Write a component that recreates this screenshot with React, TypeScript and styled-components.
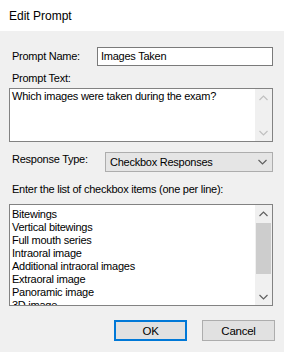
import styled, { createGlobalStyle } from 'styled-components';

const GlobalStyle = createGlobalStyle`
  html, body {
    margin: 0;
    padding: 0;
    background: #f0f0f0;
  }
  body {
    font-family: "Liberation Sans", Arial, sans-serif;
    font-size: 11px;
    letter-spacing: -0.25px;
    color: #000;
  }
`;

const Window = styled.div`
  width: 284px;
  height: 352px;
  display: flex;
  flex-direction: column;
  overflow: hidden;
`;

const TitleBar = styled.div`
  height: 31px;
  background: #fff;
  display: flex;
  align-items: center;
  padding-left: 9px;
  font-size: 12px;
  letter-spacing: 0;
`;

const Body = styled.div`
  flex: 1;
  background: #f0f0f0;
  display: flex;
  flex-direction: column;
  padding: 16px 11px 0 9px;
`;

const FieldRow = styled.div<{ $top?: number }>`
  display: flex;
  align-items: flex-start;
  margin-top: ${(p) => p.$top ?? 0}px;
`;

const Label = styled.div<{ $width?: number; $offset?: number }>`
  padding-left: 3px;
  width: ${(p) => (p.$width ? `${p.$width}px` : 'auto')};
  margin-top: ${(p) => p.$offset ?? 0}px;
  line-height: 14px;
  white-space: nowrap;
`;

const TextInput = styled.div`
  flex: 1;
  height: 19px;
  box-sizing: border-box;
  border: 1px solid #7a7a7a;
  background: #fff;
  padding: 0 3px;
  line-height: 17px;
`;

const BlockLabel = styled.div<{ $top: number }>`
  padding-left: 3px;
  margin-top: ${(p) => p.$top}px;
  line-height: 14px;
`;

const Box = styled.div<{ $height: number; $top: number }>`
  margin-top: ${(p) => p.$top}px;
  height: ${(p) => p.$height}px;
  box-sizing: border-box;
  border: 1px solid #828282;
  background: #fff;
  display: flex;
  overflow: hidden;
`;

const BoxText = styled.div<{ $padTop: number }>`
  flex: 1;
  padding: ${(p) => p.$padTop}px 2px 0 2px;
  line-height: 13px;
  white-space: pre;
  overflow: hidden;
`;

const ScrollBar = styled.div`
  width: 17px;
  background: #f0f0f0;
  display: flex;
  flex-direction: column;
`;

const ArrowCell = styled.div`
  height: 17px;
  display: flex;
  align-items: center;
  justify-content: center;
`;

const Track = styled.div`
  flex: 1;
  display: flex;
  flex-direction: column;
`;

const Thumb = styled.div`
  margin: 1px 1px 0 1px;
  height: 51px;
  background: #cdcdcd;
`;

const Select = styled.div`
  flex: 1;
  height: 20px;
  box-sizing: border-box;
  border: 1px solid #adadad;
  background: #e5e5e5;
  display: flex;
  align-items: center;
  justify-content: space-between;
  padding: 0 5px 0 4px;
`;

const ButtonRow = styled.div`
  display: flex;
  justify-content: flex-end;
  gap: 15px;
  margin-top: 14px;
  margin-right: -2px;
`;

const Button = styled.div<{ $default?: boolean }>`
  width: 73px;
  height: 21px;
  box-sizing: border-box;
  border: ${(p) => (p.$default ? '2px solid #0078d7' : '1px solid #adadad')};
  background: #e1e1e1;
  display: flex;
  align-items: center;
  justify-content: center;
  font-size: 11.5px;
`;

const Chevron = ({ up, color }: { up?: boolean; color: string }) => (
  <svg width="9" height="6" viewBox="0 0 9 6">
    <path
      d={up ? 'M0.5 5 L4.5 1 L8.5 5' : 'M0.5 1 L4.5 5 L8.5 1'}
      fill="none"
      stroke={color}
      strokeWidth="1.2"
    />
  </svg>
);

const items = [
  'Bitewings',
  'Vertical bitewings',
  'Full mouth series',
  'Intraoral image',
  'Additional intraoral images',
  'Extraoral image',
  'Panoramic image',
  '3D image',
];

export default function App() {
  return (
    <Window>
      <GlobalStyle />
      <TitleBar>Edit Prompt</TitleBar>
      <Body>
        <FieldRow>
          <Label $width={85} $offset={2}>Prompt Name:</Label>
          <TextInput>Images Taken</TextInput>
        </FieldRow>
        <BlockLabel $top={5}>Prompt Text:</BlockLabel>
        <Box $top={3} $height={54}>
          <BoxText $padTop={1}>Which images were taken during the exam?</BoxText>
          <ScrollBar>
            <ArrowCell>
              <Chevron up color="#c0c0c0" />
            </ArrowCell>
            <Track />
            <ArrowCell>
              <Chevron color="#c0c0c0" />
            </ArrowCell>
          </ScrollBar>
        </Box>
        <FieldRow $top={10}>
          <Label $width={93} $offset={0}>Response Type:</Label>
          <Select>
            <span>Checkbox Responses</span>
            <Chevron color="#606060" />
          </Select>
        </FieldRow>
        <BlockLabel $top={10}>Enter the list of checkbox items (one per line):</BlockLabel>
        <Box $top={8} $height={102}>
          <BoxText $padTop={3}>{items.join('\n')}</BoxText>
          <ScrollBar>
            <ArrowCell>
              <Chevron up color="#606060" />
            </ArrowCell>
            <Track>
              <Thumb />
            </Track>
            <ArrowCell>
              <Chevron color="#606060" />
            </ArrowCell>
          </ScrollBar>
        </Box>
        <ButtonRow>
          <Button $default>OK</Button>
          <Button>Cancel</Button>
        </ButtonRow>
      </Body>
    </Window>
  );
}
